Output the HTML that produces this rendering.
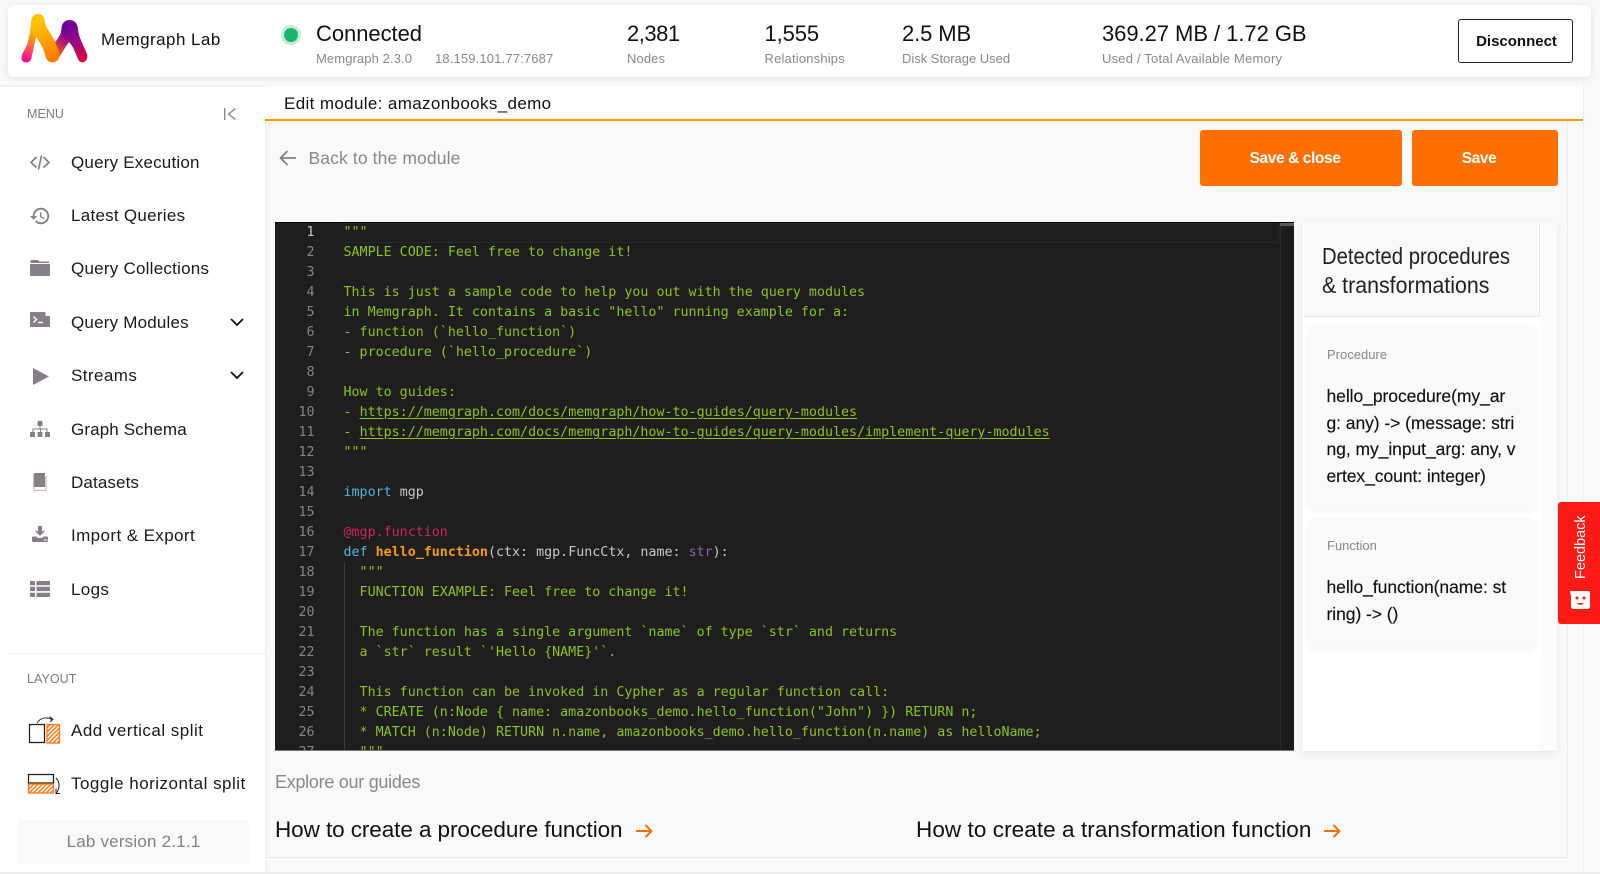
<!DOCTYPE html>
<html><head><meta charset="utf-8"><title>Memgraph Lab</title>
<style>
html,body{margin:0;padding:0;width:1600px;height:874px;overflow:hidden;background:#f9f9f9;font-family:"Liberation Sans",sans-serif;color:#111}
div,span,a{box-sizing:border-box}
.a{position:absolute}
.t{position:absolute;white-space:nowrap;line-height:20px}
.g{color:#8b868d}
.m{font-size:17px;letter-spacing:.2px;color:#1a1a1a;left:71px}
svg{position:absolute;overflow:visible}
.sub{font-size:13px;color:#8b868d;letter-spacing:.1px}
.big{font-size:22px;color:#111;letter-spacing:.1px}
#code{position:absolute;left:275px;top:222px;width:1019px;height:529px;background:#1e1e1e;border-top:1px solid #000;border-bottom:1px solid #777;overflow:hidden;font-family:"DejaVu Sans Mono","Liberation Mono",monospace;font-size:13.33px;line-height:20px}
#nums{position:absolute;left:0;top:0;width:39.5px;text-align:right;color:#858585;white-space:pre}
#src{position:absolute;left:68.5px;top:0;color:#8ec21c;white-space:pre}
#src u{text-underline-offset:2px}
.k{color:#4fb8d2}.w{color:#c8c8c8}.d{color:#d0245f}.f{color:#f59c0f;font-weight:bold}.s{color:#83689a}
.card{position:absolute;left:1308px;width:228px;background:#f9f9f9;border-radius:6px;box-shadow:0 3px 8px rgba(0,0,0,.05)}
.p{font-size:17.5px;letter-spacing:-.06px;color:#111;left:1326.5px;line-height:26.7px;-webkit-text-stroke:.15px #111}
.btn{position:absolute;top:130px;height:56px;background:#ff7000;border-radius:3px;color:#fff;font-size:15.5px;font-weight:bold;text-align:center;line-height:57px;letter-spacing:-.4px;padding-right:12px}
</style></head><body>

<!-- header -->
<div class="a" style="left:8px;top:5px;width:1583px;height:72px;background:#fff;border-radius:6px;box-shadow:0 1px 8px rgba(0,0,0,.1)"></div>
<svg style="left:0;top:0" width="100" height="76" viewBox="0 0 100 76">
<defs>
<linearGradient id="l1" gradientUnits="userSpaceOnUse" x1="38" y1="22" x2="26" y2="60"><stop offset="0" stop-color="#ffc400"/><stop offset=".35" stop-color="#ffa800"/><stop offset="1" stop-color="#ff0a9c"/></linearGradient>
<linearGradient id="l2" gradientUnits="userSpaceOnUse" x1="38" y1="22" x2="53" y2="60"><stop offset="0" stop-color="#ffc400"/><stop offset="1" stop-color="#ff7a00"/></linearGradient>
<linearGradient id="l3" gradientUnits="userSpaceOnUse" x1="70" y1="28" x2="52" y2="58"><stop offset="0" stop-color="#730098"/><stop offset=".45" stop-color="#b01a70"/><stop offset="1" stop-color="#ff8000"/></linearGradient>
<linearGradient id="l4" gradientUnits="userSpaceOnUse" x1="68" y1="24" x2="83" y2="62"><stop offset="0" stop-color="#6f0099"/><stop offset=".5" stop-color="#9a0a80"/><stop offset="1" stop-color="#ea0034"/></linearGradient>
</defs>
<path d="M61.500 28C61.500 33 58 40 53 44C49 48 46 50 47 54C48 60 56 62 60 56C63 51 66 46 69 42L70 28Z" fill="url(#l3)"/>
<path d="M21.500 58C21.500 53 25.500 50 27.500 43C29.500 36 30.500 30 31 22C31.500 17 34 14 38 14C42 14 45 17 45 24L37 33C35.500 40 33 50 31.500 58C30.500 64 21.500 64 21.500 58Z" fill="url(#l1)"/>
<path d="M31 24C31 15 42 10 45 23C47 30 53 36 55 42C57 47 60 52 59.500 56C58.500 64 47 65 45.500 56C44 48 38 40 33 32Z" fill="url(#l2)"/>
<path d="M61.500 28C62 23 65 20 69.500 20C74 20 77.500 23 78 29C78.500 37 83 44 87 54C88.500 60 84 63.500 81 62C78 61 77 56 75 52C73 47 71 44 69 42L62 36Z" fill="url(#l4)"/>
</svg>
<div class="t" style="left:101px;top:30px;font-size:17px;letter-spacing:.45px">Memgraph Lab</div>
<div class="a" style="left:281px;top:25px;width:20px;height:20px;border-radius:50%;background:#c5ebd5"></div>
<div class="a" style="left:284px;top:28px;width:14px;height:14px;border-radius:50%;background:#1db56e"></div>
<div class="t big" style="left:316px;top:24px;letter-spacing:-.05px">Connected</div>
<div class="t sub" style="left:316px;top:49px">Memgraph 2.3.0</div>
<div class="t sub" style="left:435px;top:49px;letter-spacing:.15px">18.159.101.77:7687</div>
<div class="t big" style="left:627px;top:24px;letter-spacing:-.5px">2,381</div>
<div class="t sub" style="left:627px;top:49px">Nodes</div>
<div class="t big" style="left:764.500px;top:24px;letter-spacing:-.1px">1,555</div>
<div class="t sub" style="left:764.500px;top:49px;letter-spacing:.18px">Relationships</div>
<div class="t big" style="left:902px;top:24px;letter-spacing:-.1px">2.5 MB</div>
<div class="t sub" style="left:902px;top:49px;letter-spacing:-.02px">Disk Storage Used</div>
<div class="t big" style="left:1102px;top:24px;letter-spacing:-.05px">369.27 MB / 1.72 GB</div>
<div class="t sub" style="left:1102px;top:49px;letter-spacing:.2px">Used / Total Available Memory</div>
<div class="a" style="left:1458px;top:19px;width:115px;height:44px;border:1px solid #222;border-radius:3px;background:#fff;text-align:center;font-size:15px;font-weight:bold;line-height:43px;color:#111;letter-spacing:0;padding-left:2px">Disconnect</div>

<!-- sidebar -->
<div class="a" style="left:0;top:87px;width:265px;height:785px;background:#fff;box-shadow:0 0 3px rgba(0,0,0,.12)"></div>
<div class="t g" style="left:27px;top:104px;font-size:12.5px;color:#7d787f;letter-spacing:.05px">MENU</div>
<svg style="left:224px;top:107.500px" width="12" height="12" viewBox="0 0 12 12" fill="none" stroke="#857f87" stroke-width="1.300"><path d="M.7 0V12M11.500 .5L4.500 6L11.500 11.500"/></svg>

<svg style="left:30px;top:153px" width="20" height="20" viewBox="0 0 20 20" fill="none" stroke="#7f7a82" stroke-width="1.600"><path d="M6.500 4L1 9.500L6.500 14.500M13.500 4L19 9.500L13.500 14.500M11.500 2.500L8.500 16.500"/></svg>
<div class="t m" style="top:153px">Query Execution</div>
<svg style="left:29px;top:205px" width="22" height="22" viewBox="0 0 24 24" fill="#857f87"><path d="M13 3c-4.970 0-9 4.030-9 9H1l3.890 3.890.07.140L9 12H6c0-3.870 3.130-7 7-7s7 3.130 7 7-3.130 7-7 7c-1.930 0-3.680-.79-4.940-2.060l-1.420 1.420C8.270 19.990 10.510 21 13 21c4.970 0 9-4.030 9-9s-4.030-9-9-9zm-1 5v5l4.280 2.540.72-1.210-3.500-2.080V8H12z"/></svg>
<div class="t m" style="top:206px;letter-spacing:.27px">Latest Queries</div>
<svg style="left:30px;top:260px" width="20" height="16" viewBox="0 0 20 16" fill="#857f87"><path d="M1 0H8L9.500 1.500H19V3H0.500V1ZM0 4H20V15C20 15.600 19.600 16 19 16H1C.4 16 0 15.600 0 15Z"/></svg>
<div class="t m" style="top:259px;letter-spacing:.24px">Query Collections</div>
<svg style="left:30px;top:312px" width="20" height="15" viewBox="0 0 20 15"><path d="M0 0H15L20 4.500V15H0Z" fill="#857f87"/><path d="M15.500 0L20 4H15.500Z" fill="#fff"/><path d="M3.500 4.500L6.500 7.500L3.500 10.500" fill="none" stroke="#fff" stroke-width="1.400"/><path d="M8 10.500H13" stroke="#fff" stroke-width="1.400"/></svg>
<div class="t m" style="top:313px;letter-spacing:.2px">Query Modules</div>
<svg style="left:230px;top:318px" width="14" height="9" viewBox="0 0 14 9" fill="none" stroke="#111" stroke-width="1.800"><path d="M1 1L7 7L13 1"/></svg>
<svg style="left:33px;top:368px" width="16" height="17" viewBox="0 0 16 17"><path d="M0 0L16 8.500L0 17Z" fill="#857f87"/></svg>
<div class="t m" style="top:366px;letter-spacing:.42px">Streams</div>
<svg style="left:230px;top:371px" width="14" height="9" viewBox="0 0 14 9" fill="none" stroke="#111" stroke-width="1.800"><path d="M1 1L7 7L13 1"/></svg>
<svg style="left:30px;top:421px" width="20" height="16" viewBox="0 0 20 16" fill="#857f87"><rect x="7.500" y="0" width="5" height="5" rx=".6"/><rect x="0" y="11" width="5" height="5" rx=".6"/><rect x="7.500" y="11" width="5" height="5" rx=".6"/><rect x="15" y="11" width="5" height="5" rx=".6"/><path d="M9.500 5h1v2.500h7V11h-1V8.500h-5.500V11h-1V8.500H3.500V11h-1V7.500h7z"/></svg>
<div class="t m" style="top:420px;letter-spacing:.12px">Graph Schema</div>
<svg style="left:33px;top:473px" width="14" height="18" viewBox="0 0 14 18"><path d="M1 0H12V14H1Z" fill="#857f87"/><path d="M.7 1V16C.7 17 1.500 17.400 2.300 17.400H13V3" fill="none" stroke="#b3afb5" stroke-width="1"/></svg>
<div class="t m" style="top:473px;letter-spacing:.12px">Datasets</div>
<svg style="left:32px;top:526px" width="16" height="16" viewBox="0 0 16 16" fill="#857f87"><path d="M6 0H10V5H13L8 10L3 5H6Z"/><path d="M1 10.500H4.500L6 12H10L11.500 10.500H15C15.500 10.500 16 11 16 11.500V15C16 15.500 15.500 16 15 16H1C.5 16 0 15.500 0 15V11.500C0 11 .5 10.500 1 10.500Z"/><circle cx="13" cy="14" r=".8" fill="#fff"/><circle cx="15" cy="14" r=".6" fill="#fff"/></svg>
<div class="t m" style="top:526px;letter-spacing:.4px">Import &amp; Export</div>
<svg style="left:30px;top:581px" width="20" height="16" viewBox="0 0 20 16" fill="#857f87"><rect width="5" height="4.300" rx=".6"/><rect x="6.500" width="13.500" height="4.300" rx=".6"/><rect y="5.800" width="5" height="4.300" rx=".6"/><rect x="6.500" y="5.800" width="13.500" height="4.300" rx=".6"/><rect y="11.700" width="5" height="4.300" rx=".6"/><rect x="6.500" y="11.700" width="13.500" height="4.300" rx=".6"/></svg>
<div class="t m" style="top:580px;letter-spacing:.35px">Logs</div>

<div class="a" style="left:9px;top:653px;width:256px;height:1px;background:#f1f1f1"></div>
<div class="t" style="left:27px;top:669px;font-size:12.5px;color:#7d787f;letter-spacing:.05px">LAYOUT</div>

<svg style="left:28px;top:716px" width="34" height="30" viewBox="0 0 34 30">
<defs><pattern id="h" width="3" height="3" patternUnits="userSpaceOnUse" patternTransform="rotate(-45)"><rect width="3" height="3" fill="#ffffff"/><rect width="3" height="1.500" fill="#ff7a1a"/></pattern></defs>
<rect x="1.500" y="8.500" width="15" height="18" fill="#fff" stroke="#222" stroke-width="1.300"/>
<rect x="19" y="8.500" width="12.500" height="18.500" fill="url(#h)" stroke="#ff7a1a" stroke-width="1.300"/>
<path d="M9 7C13 1 19 1 24 3.500M21.500 .5L25 3.500L22 6" fill="none" stroke="#222" stroke-width="1"/>
</svg>
<div class="t m" style="top:721px;letter-spacing:.48px">Add vertical split</div>
<svg style="left:27px;top:773px" width="34" height="22" viewBox="0 0 34 22">
<rect x="1.500" y="1.500" width="25" height="8.500" fill="#fff" stroke="#222" stroke-width="1.300"/>
<rect x="1.500" y="11" width="25" height="9" fill="url(#h)" stroke="#ff7a1a" stroke-width="1.300"/>
<path d="M29 5C33 9 33 15 29.500 20M29 15.500V20.500H33" fill="none" stroke="#222" stroke-width="1"/>
</svg>
<div class="t m" style="top:774px;letter-spacing:.49px">Toggle horizontal split</div>
<div class="a" style="left:18px;top:820px;width:231px;height:44px;background:#f9f9f9;text-align:center;line-height:43px;font-size:17px;color:#857f87;letter-spacing:.2px">Lab version 2.1.1</div>

<!-- main bg -->
<div class="a" style="left:265px;top:87px;width:1318px;height:32px;background:#fff"></div>
<div class="a" style="left:265px;top:119px;width:1318px;height:2px;background:#ff9a00"></div>
<div class="a" style="left:1583px;top:87px;width:1px;height:785px;background:#efefef"></div>
<div class="a" style="left:1567px;top:121px;width:1px;height:737px;background:#ececec"></div>
<div class="a" style="left:265px;top:857px;width:1303px;height:1px;background:#e6e6e6"></div>
<div class="a" style="left:0;top:872px;width:1600px;height:2px;background:#ececec"></div>
<div class="t" style="left:284px;top:94px;font-size:17px;letter-spacing:.36px;color:#111">Edit module: amazonbooks_demo</div>

<svg style="left:279px;top:150px" width="17" height="16" viewBox="0 0 17 16" fill="none" stroke="#857f87" stroke-width="1.700"><path d="M17 8H1.500M8.500 1L1.500 8L8.500 15"/></svg>
<div class="t g" style="left:308.500px;top:148px;font-size:17.500px;color:#8b868d;letter-spacing:.12px">Back to the module</div>
<div class="btn" style="left:1200px;width:202px">Save &amp; close</div>
<div class="btn" style="left:1412px;width:146px">Save</div>

<!-- editor -->
<div id="code">
<div class="a" style="left:68px;top:0;width:936px;height:20px;border:1px solid #282828;border-left:0"></div>
<div id="nums"><span style="color:#c6c6c6">1</span>
2
3
4
5
6
7
8
9
10
11
12
13
14
15
16
17
18
19
20
21
22
23
24
25
26
27</div>
<div id="src">"""
SAMPLE CODE: Feel free to change it!

This is just a sample code to help you out with the query modules
in Memgraph. It contains a basic "hello" running example for a:
- function (`hello_function`)
- procedure (`hello_procedure`)

How to guides:
- <u>https://memgraph.com/docs/memgraph/how-to-guides/query-modules</u>
- <u>https://memgraph.com/docs/memgraph/how-to-guides/query-modules/implement-query-modules</u>
"""

<span class="k">import</span> <span class="w">mgp</span>

<span class="d">@mgp.function</span>
<span class="k">def</span> <span class="f">hello_function</span><span class="w">(ctx: mgp.FuncCtx, name: </span><span class="s">str</span><span class="w">):</span>
  """
  FUNCTION EXAMPLE: Feel free to change it!

  The function has a single argument `name` of type `str` and returns
  a `str` result `'Hello {NAME}'`.

  This function can be invoked in Cypher as a regular function call:
  * CREATE (n:Node { name: amazonbooks_demo.hello_function("John") }) RETURN n;
  * MATCH (n:Node) RETURN n.name, amazonbooks_demo.hello_function(n.name) as helloName;
  """</div>
<div class="a" style="left:69px;top:339px;width:1px;height:190px;background:#3a3a3a"></div>
<div class="a" style="left:1005px;top:0;width:14px;height:529px;background:#1c1c1c;border-left:1px solid #2a2a2a"></div>
<div class="a" style="left:1005px;top:0;width:14px;height:3px;background:#5a5a5a"></div>
</div>

<!-- right panel -->
<div class="a" style="left:1303px;top:222px;width:254px;height:529px;background:#fff;box-shadow:0 2px 8px rgba(0,0,0,.08)"></div>
<div class="a" style="left:1541px;top:222px;width:16px;height:529px;background:#fbfbfb"></div>
<div class="a" style="left:1304px;top:223px;width:236px;height:94px;background:#f9f9f9;border-bottom:1px solid #e6e6e6;border-right:1px solid #e6e6e6"></div>
<div class="t" style="left:1322px;top:242px;font-size:23.500px;line-height:29px;color:#222;transform-origin:0 0;transform:scaleX(.862)">Detected procedures</div>
<div class="t" style="left:1322px;top:271px;font-size:23.500px;line-height:29px;color:#222;transform-origin:0 0;transform:scaleX(.909)">&amp; transformations</div>
<div class="card" style="top:325px;height:183px"></div>
<div class="t g" style="left:1327px;top:345px;font-size:13px;color:#8b868d">Procedure</div>
<div class="t p" style="top:383px">hello_procedure(my_ar<br>g: any) -&gt; (message: stri<br>ng, my_input_arg: any, v<br>ertex_count: integer)</div>
<div class="card" style="top:518px;height:129px"></div>
<div class="t g" style="left:1327px;top:536px;font-size:13px;color:#8b868d">Function</div>
<div class="t p" style="top:574px">hello_function(name: st<br>ring) -&gt; ()</div>

<!-- feedback -->
<div class="a" style="left:1558px;top:502px;width:42px;height:122px;background:#ff1a16;border-radius:3px 0 0 3px"></div>
<div class="t" style="left:1581px;top:579px;font-size:14.500px;color:#fff;transform-origin:0 0;transform:rotate(-90deg) translateY(-10px)">Feedback</div>
<svg style="left:1569px;top:591px" width="22" height="19" viewBox="0 0 22 19"><path d="M1 0H19C20.500 0 21 1 21 2V15C21 17 20 18 18 18H5C3 18 2 17 2 15V5Z" fill="#fff"/><circle cx="8" cy="7" r="1.500" fill="#ff1a16"/><circle cx="15" cy="7" r="1.500" fill="#ff1a16"/><path d="M8.500 12H14.500C14 14.500 9 14.500 8.500 12Z" fill="#ff1a16"/></svg>

<!-- guides -->
<div class="t g" style="left:275px;top:772px;font-size:18px;color:#8b868d;letter-spacing:-.28px">Explore our guides</div>
<div class="t" style="left:275px;top:820px;font-size:22.500px;color:#111;letter-spacing:-.08px">How to create a procedure function</div>
<svg style="left:636px;top:824px" width="17" height="14" viewBox="0 0 17 14" fill="none" stroke="#ff7000" stroke-width="2"><path d="M0 7H15.500M9.500 1L15.500 7L9.500 13"/></svg>
<div class="t" style="left:916px;top:820px;font-size:22.500px;color:#111;letter-spacing:.07px">How to create a transformation function</div>
<svg style="left:1324px;top:824px" width="17" height="14" viewBox="0 0 17 14" fill="none" stroke="#ff7000" stroke-width="2"><path d="M0 7H15.500M9.500 1L15.500 7L9.500 13"/></svg>

</body></html>
